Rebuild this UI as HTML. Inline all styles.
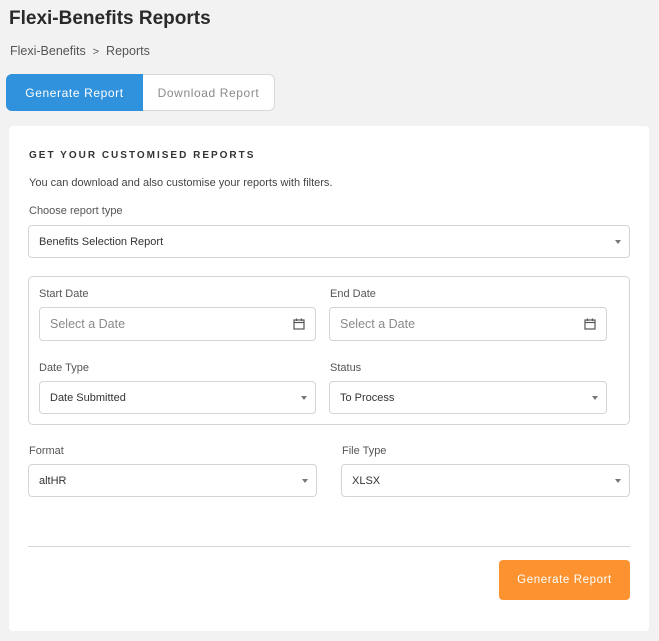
<!DOCTYPE html>
<html><head><meta charset="utf-8"><style>
*{box-sizing:border-box;margin:0;padding:0}
body{width:659px;height:641px;background:#f2f2f2;font-family:"Liberation Sans",sans-serif;position:relative;overflow:hidden;color:#333}
.a{position:absolute}
.lbl{position:absolute;font-size:11px;color:#555}
.box{position:absolute;border:1px solid #d4d4d8;border-radius:4px;background:#fff;font-size:11px;color:#333;padding-left:10px;display:flex;align-items:center}
.arr{position:absolute;right:8px;top:50%;margin-top:-2px;width:0;height:0;border-left:3.5px solid transparent;border-right:3.5px solid transparent;border-top:4px solid #777}
.cal{position:absolute;right:10px;top:50%;margin-top:-6px}
.ph{color:#8a8a8a;font-size:12.5px}
</style></head><body>
<div class="a" style="left:9px;top:8px;font-size:19px;font-weight:bold;color:#2a2a2a">Flexi-Benefits Reports</div>
<div class="a" style="left:10px;top:44px;font-size:12.5px;color:#555">Flexi-Benefits &nbsp;<span style="font-size:11px">&gt;</span>&nbsp; Reports</div>
<div class="a" style="left:6px;top:74px;width:269px;height:37px;border:1px solid #d8d8dc;border-radius:6px;background:#fff"></div>
<div class="a" style="left:6px;top:74px;width:137px;height:37px;background:#3092dc;border-radius:6px 0 0 6px;color:#fff;font-size:12px;letter-spacing:0.6px;display:flex;align-items:center;justify-content:center">Generate Report</div>
<div class="a" style="left:143px;top:74px;width:131px;height:37px;color:#8a8a8a;font-size:12px;letter-spacing:0.6px;display:flex;align-items:center;justify-content:center">Download Report</div>
<div class="a" style="left:9px;top:126px;width:640px;height:505px;background:#fff;border-radius:4px"></div>
<div class="a" style="left:29px;top:150px;font-size:10px;font-weight:bold;letter-spacing:2px;color:#333">GET YOUR CUSTOMISED REPORTS</div>
<div class="a" style="left:29px;top:177px;font-size:11px;color:#444">You can download and also customise your reports with filters.</div>
<div class="lbl" style="left:29px;top:205px">Choose report type</div>
<div class="box" style="left:28px;top:225px;width:602px;height:33px">Benefits Selection Report<span class="arr"></span></div>
<div class="a" style="left:28px;top:276px;width:602px;height:149px;border:1px solid #d4d4d8;border-radius:5px"></div>
<div class="lbl" style="left:39px;top:288px">Start Date</div>
<div class="box ph" style="left:39px;top:307px;width:277px;height:34px">Select a Date<svg class="cal" width="12" height="12" viewBox="0 0 12 12" fill="none" stroke="#555" stroke-width="1.2"><rect x="1" y="2" width="10" height="9"/><line x1="1" y1="4.5" x2="11" y2="4.5"/><line x1="3.5" y1="0.5" x2="3.5" y2="3"/><line x1="8.5" y1="0.5" x2="8.5" y2="3"/></svg></div>
<div class="lbl" style="left:330px;top:288px">End Date</div>
<div class="box ph" style="left:329px;top:307px;width:278px;height:34px">Select a Date<svg class="cal" width="12" height="12" viewBox="0 0 12 12" fill="none" stroke="#555" stroke-width="1.2"><rect x="1" y="2" width="10" height="9"/><line x1="1" y1="4.5" x2="11" y2="4.5"/><line x1="3.5" y1="0.5" x2="3.5" y2="3"/><line x1="8.5" y1="0.5" x2="8.5" y2="3"/></svg></div>
<div class="lbl" style="left:39px;top:362px">Date Type</div>
<div class="box" style="left:39px;top:381px;width:277px;height:33px">Date Submitted<span class="arr"></span></div>
<div class="lbl" style="left:330px;top:362px">Status</div>
<div class="box" style="left:329px;top:381px;width:278px;height:33px">To Process<span class="arr"></span></div>
<div class="lbl" style="left:29px;top:445px">Format</div>
<div class="box" style="left:28px;top:464px;width:289px;height:33px">altHR<span class="arr"></span></div>
<div class="lbl" style="left:342px;top:445px">File Type</div>
<div class="box" style="left:341px;top:464px;width:289px;height:33px">XLSX<span class="arr"></span></div>
<div class="a" style="left:28px;top:546px;width:602px;height:1px;background:#d4d4dc"></div>
<div class="a" style="left:499px;top:560px;width:131px;height:40px;background:#fd9330;border-radius:4px;color:#fff;font-size:11.5px;letter-spacing:0.6px;display:flex;align-items:center;justify-content:center">Generate Report</div>
</body></html>
